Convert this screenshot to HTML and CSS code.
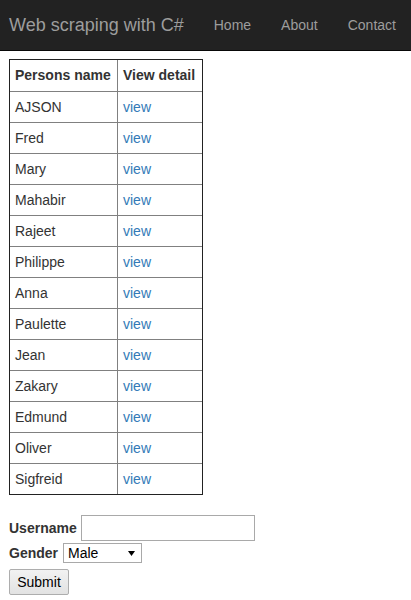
FILE: index.html
```html
<!DOCTYPE html>
<html>
<head>
<meta charset="utf-8">
<title>Web scraping with C#</title>
<link rel="stylesheet" href="styles.css">
</head>
<body>
<nav class="navbar">
  <a class="brand" href="#">Web scraping with C#</a>
  <ul class="nav">
    <li><a href="#">Home</a></li>
    <li><a href="#">About</a></li>
    <li><a href="#">Contact</a></li>
  </ul>
</nav>
<main class="content">
  <table class="persons">
    <thead>
      <tr><th class="col-name">Persons name</th><th class="col-view">View detail</th></tr>
    </thead>
    <tbody>
      <tr><td>AJSON</td><td><a href="#">view</a></td></tr>
      <tr><td>Fred</td><td><a href="#">view</a></td></tr>
      <tr><td>Mary</td><td><a href="#">view</a></td></tr>
      <tr><td>Mahabir</td><td><a href="#">view</a></td></tr>
      <tr><td>Rajeet</td><td><a href="#">view</a></td></tr>
      <tr><td>Philippe</td><td><a href="#">view</a></td></tr>
      <tr><td>Anna</td><td><a href="#">view</a></td></tr>
      <tr><td>Paulette</td><td><a href="#">view</a></td></tr>
      <tr><td>Jean</td><td><a href="#">view</a></td></tr>
      <tr><td>Zakary</td><td><a href="#">view</a></td></tr>
      <tr><td>Edmund</td><td><a href="#">view</a></td></tr>
      <tr><td>Oliver</td><td><a href="#">view</a></td></tr>
      <tr><td>Sigfreid</td><td><a href="#">view</a></td></tr>
    </tbody>
  </table>
  <form class="form">
    <div class="row row-user">
      <label for="username">Username</label>
      <input id="username" class="text-input" type="text">
    </div>
    <div class="row row-gender">
      <label for="gender">Gender</label>
      <span class="select-wrap">
        <select id="gender" class="select">
          <option>Male</option>
          <option>Female</option>
        </select>
        <svg class="select-arrow" width="7" height="5" viewBox="0 0 7 5"><path d="M0 0H7L3.5 5Z" fill="#000"/></svg>
      </span>
    </div>
    <div class="row row-submit">
      <button type="button" class="btn">Submit</button>
    </div>
  </form>
</main>
</body>
</html>
```

FILE: styles.css
```css
* { box-sizing: border-box; }
html, body {
  margin: 0;
  padding: 0;
  background: #fff;
  font-family: "Liberation Sans", Arial, sans-serif;
  font-size: 14px;
  line-height: 20px;
  color: #333;
}
a { color: #337ab7; text-decoration: none; }

.navbar {
  display: flex;
  align-items: center;
  height: 51px;
  background: #222;
  border-bottom: 1px solid #080808;
  padding-left: 9px;
}
.brand {
  font-size: 18px;
  line-height: 20px;
  color: #9d9d9d;
  padding: 15px 15px 15px 0;
}
.nav {
  display: flex;
  list-style: none;
  margin: 0;
  padding: 0;
}
.nav a {
  display: block;
  color: #9d9d9d;
  padding: 15px;
  line-height: 20px;
}

.content {
  padding: 8px 9px 0 9px;
}

.persons {
  border-collapse: separate;
  border-spacing: 0;
  border: 1px solid #222;
}
.persons th, .persons td {
  padding: 5px;
  line-height: 20px;
  text-align: left;
  border-right: 1px solid #808080;
  border-bottom: 1px solid #808080;
}
.persons th {
  font-weight: bold;
  padding-bottom: 6px;
}
.persons .col-name { width: 108px; }
.persons .col-view { width: 84px; }
.persons th:last-child, .persons td:last-child { border-right: none; }
.persons tbody tr:last-child td { border-bottom: none; }

.form {
  margin-top: 20px;
}
.row {
  display: flex;
  align-items: center;
}
.row label {
  font-weight: bold;
  margin-right: 4px;
}
.row-gender label { margin-right: 5px; }
.text-input {
  width: 174px;
  height: 26px;
  border: 1px solid #a9a9a9;
  padding: 1px 2px;
  font: 14px "Liberation Sans", Arial, sans-serif;
}
.row-gender {
  margin-top: 2px;
}
.select-wrap {
  position: relative;
  display: inline-block;
}
.select {
  -webkit-appearance: none;
  appearance: none;
  width: 79px;
  height: 20px;
  border: 1px solid #a9a9a9;
  border-radius: 0;
  background: #fff;
  padding: 0 0 0 4px;
  font: 14px "Liberation Sans", Arial, sans-serif;
  color: #000;
  display: block;
}
.select-arrow {
  position: absolute;
  right: 7px;
  top: 8px;
  pointer-events: none;
}
.row-submit {
  margin-top: 6px;
}
.btn {
  width: 60px;
  height: 26px;
  border: 1px solid #adadad;
  border-radius: 2px;
  background: linear-gradient(#f2f2f2, #e2e2e2);
  font: 14px "Liberation Sans", Arial, sans-serif;
  color: #000;
  padding: 0;
}
```
